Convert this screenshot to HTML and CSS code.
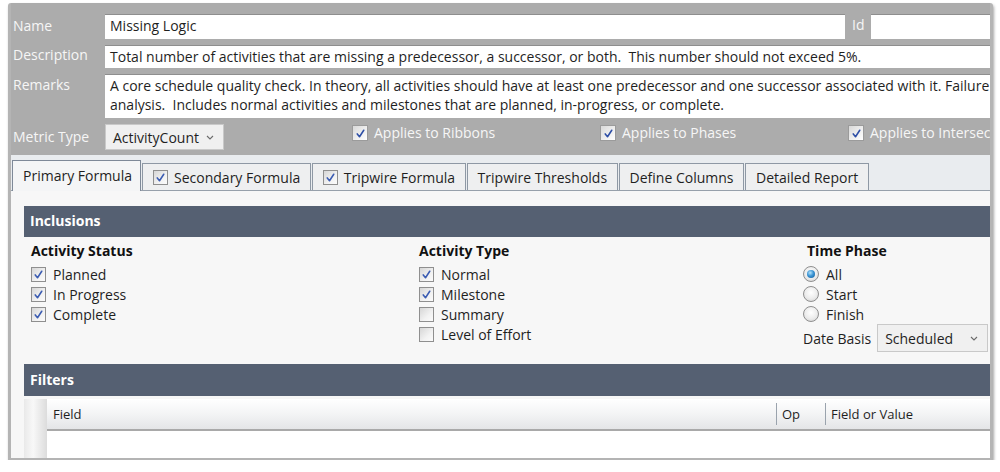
FILE: index.html
```html
<!DOCTYPE html>
<html>
<head>
<meta charset="utf-8">
<title>Metric</title>
<link rel="stylesheet" href="styles.css">
</head>
<body>
<div class="panel">
  <div class="props">
    <div class="lbl lbl-name">Name</div>
    <div class="row-name">
      <div class="field f-name">Missing Logic</div>
      <div class="lbl id-lbl">Id</div>
      <div class="field f-id"></div>
    </div>
    <div class="lbl lbl-desc">Description</div>
    <div class="field f-desc">Total number of activities that are missing a predecessor, a successor, or both.&nbsp; This number should not exceed 5%.</div>
    <div class="lbl lbl-rem">Remarks</div>
    <div class="field f-rem">
      <div class="line">A core schedule quality check. In theory, all activities should have at least one predecessor and one successor associated with it. Failure</div>
      <div class="line">analysis.&nbsp; Includes normal activities and milestones that are planned, in-progress, or complete.</div>
    </div>
    <div class="lbl lbl-metric">Metric Type</div>
    <div class="row-metric">
      <div class="select metric-select"><span>ActivityCount</span><svg class="chev" viewBox="0 0 8 5"><path d="M1 1 L4 4 L7 1"/></svg></div>
      <div class="applies first"><span class="cb hcb"><svg viewBox="0 0 16 16"><path d="M4 8.5 L6.8 12 L12 4"/></svg></span>Applies to Ribbons</div>
      <div class="applies"><span class="cb hcb"><svg viewBox="0 0 16 16"><path d="M4 8.5 L6.8 12 L12 4"/></svg></span>Applies to Phases</div>
      <div class="applies last"><span class="cb hcb"><svg viewBox="0 0 16 16"><path d="M4 8.5 L6.8 12 L12 4"/></svg></span>Applies to Intersec</div>
    </div>
  </div>

  <div class="tabs">
    <div class="tab active">Primary Formula</div>
    <div class="tab"><span class="cb tcb"><svg viewBox="0 0 16 16"><path d="M4 8.5 L6.8 12 L12 4"/></svg></span>Secondary Formula</div>
    <div class="tab"><span class="cb tcb"><svg viewBox="0 0 16 16"><path d="M4 8.5 L6.8 12 L12 4"/></svg></span>Tripwire Formula</div>
    <div class="tab">Tripwire Thresholds</div>
    <div class="tab">Define Columns</div>
    <div class="tab">Detailed Report</div>
  </div>

  <div class="content">
    <div class="bar">Inclusions</div>
    <div class="incl">
      <div class="col col-status">
        <div class="heading">Activity Status</div>
        <div class="opt"><span class="cb"><svg viewBox="0 0 16 16"><path d="M4 8.5 L6.8 12 L12 4"/></svg></span>Planned</div>
        <div class="opt"><span class="cb"><svg viewBox="0 0 16 16"><path d="M4 8.5 L6.8 12 L12 4"/></svg></span>In Progress</div>
        <div class="opt"><span class="cb"><svg viewBox="0 0 16 16"><path d="M4 8.5 L6.8 12 L12 4"/></svg></span>Complete</div>
      </div>
      <div class="col col-type">
        <div class="heading">Activity Type</div>
        <div class="opt"><span class="cb"><svg viewBox="0 0 16 16"><path d="M4 8.5 L6.8 12 L12 4"/></svg></span>Normal</div>
        <div class="opt"><span class="cb"><svg viewBox="0 0 16 16"><path d="M4 8.5 L6.8 12 L12 4"/></svg></span>Milestone</div>
        <div class="opt"><span class="cb"></span>Summary</div>
        <div class="opt"><span class="cb"></span>Level of Effort</div>
      </div>
      <div class="col col-phase">
        <div class="heading phase-heading">Time Phase</div>
        <div class="opt"><span class="radio on"></span>All</div>
        <div class="opt"><span class="radio"></span>Start</div>
        <div class="opt"><span class="radio"></span>Finish</div>
        <div class="date-row">
          <span>Date Basis</span>
          <div class="select date-select"><span>Scheduled</span><svg class="chev" viewBox="0 0 8 5"><path d="M1 1 L4 4 L7 1"/></svg></div>
        </div>
      </div>
    </div>

    <div class="bar bar-filters">Filters</div>
    <div class="grid">
      <div class="rowhead"></div>
      <div class="gridbody">
        <div class="ghead">
          <div class="gcol gc-field">Field</div>
          <div class="gcol gc-op"><span class="sep"></span>Op</div>
          <div class="gcol gc-val"><span class="sep"></span>Field or Value</div>
        </div>
        <div class="grow"></div>
      </div>
    </div>
  </div>
</div>
</body>
</html>
```

FILE: styles.css
```css
html, body {
  margin: 0;
  padding: 0;
  background: #ffffff;
}

body {
  font-family: "Open Sans", "Noto Sans", "DejaVu Sans", sans-serif;
  font-size: 14px;
  color: #1f1f1f;
}

.panel {
  margin: 3px 0 0 8px;
  width: 985px;
  height: 457px;
  box-sizing: border-box;
  border-left: 3px solid #b4b4b4;
  border-right: 3px solid #b4b4b4;
  border-bottom: 2px solid #b4b4b4;
  border-radius: 3px 3px 0 0;
  box-shadow: 1px 2px 3px rgba(0, 0, 0, 0.35);
  background: #f7f7f7;
  overflow: hidden;
  display: flex;
  flex-direction: column;
}

/* ---------- property header ---------- */
.props {
  background: #acacac;
  padding: 11px 0 5px 2px;
  display: grid;
  grid-template-columns: 92px 1fr;
  grid-template-rows: 25px 23px 44px 26px;
  row-gap: 6px;
  overflow: hidden;
}

.lbl {
  color: #f6f6f6;
  font-size: 14px;
  white-space: nowrap;
}

.lbl-name { line-height: 23px; }
.lbl-desc { line-height: 20px; }
.lbl-rem { line-height: 22px; }
.lbl-metric { line-height: 26px; }

.field {
  background: #ffffff;
  border-top: 1px solid #8e8e8e;
  box-sizing: border-box;
  padding: 0 5px;
  white-space: nowrap;
  overflow: hidden;
  line-height: 22px;
  font-size: 14px;
  color: #1f1f1f;
}

.row-name {
  display: flex;
  align-items: stretch;
}

.f-name { width: 740px; flex: none; }

.id-lbl {
  padding: 0 7px 0 7px;
  line-height: 22px;
}

.f-id { flex: 1; }

.f-desc { line-height: 21px; }

.f-rem { padding-top: 1px; }

.f-rem .line { line-height: 19px; }

.row-metric {
  display: flex;
  align-items: flex-start;
}

.select {
  background: #f0f0f0;
  border: 1px solid #c9c9c9;
  box-sizing: border-box;
  display: flex;
  align-items: center;
  justify-content: space-between;
  padding: 0 9px 0 7px;
  color: #1f1f1f;
  font-size: 14px;
}

.chev {
  width: 8px;
  height: 5px;
  flex: none;
}

.chev path {
  fill: none;
  stroke: #6b6b6b;
  stroke-width: 1.1;
}

.metric-select {
  width: 119px;
  height: 26px;
}

.applies {
  display: flex;
  align-items: center;
  color: #f6f6f6;
  font-size: 14px;
  line-height: 18px;
  width: 248px;
  flex: none;
  white-space: nowrap;
}

.applies.first { margin-left: 128px; }
.applies.last { width: auto; }

/* ---------- checkboxes ---------- */
.cb {
  width: 15px;
  height: 15px;
  box-sizing: border-box;
  border: 1px solid #8f8f8f;
  background: linear-gradient(135deg, #d6d6d6 0%, #f2f2f2 60%, #fbfbfb 100%);
  display: inline-flex;
  align-items: center;
  justify-content: center;
  margin-right: 7px;
  flex: none;
}

.cb svg {
  width: 13px;
  height: 13px;
}

.cb path {
  fill: none;
  stroke: #3b5cb2;
  stroke-width: 1.9;
  stroke-linecap: round;
  stroke-linejoin: round;
}

.hcb {
  width: 16px;
  height: 16px;
  margin-right: 6px;
  border-color: #9b9b9b;
  background: linear-gradient(135deg, #d9d9d9 0%, #f4f4f4 70%, #ffffff 100%);
}

.hcb path { stroke: #2d4ea6; }

.tcb { margin-right: 6px; }

/* ---------- tabs ---------- */
.tabs {
  background: #e9ecef;
  height: 36px;
  box-sizing: border-box;
  border-bottom: 1px solid #97a0ab;
  display: flex;
  align-items: flex-end;
  padding-left: 1px;
  flex: none;
}

.tab {
  height: 27px;
  box-sizing: border-box;
  border: 1px solid #8e98a4;
  border-bottom: none;
  background: #eeeff0;
  padding: 0 9.5px 0 10px;
  display: flex;
  align-items: center;
  margin-right: 1px;
  font-size: 14px;
  white-space: nowrap;
  color: #1f1f1f;
}

.tab.active {
  height: 31px;
  margin-bottom: -1px;
  background: #f4f5f6;
  border-color: #7e8998;
  padding: 0 8px 2px 10px;
}

/* ---------- content ---------- */
.content {
  flex: 1;
  background: #f7f7f7;
  padding: 15px 0 0 13px;
  display: flex;
  flex-direction: column;
  min-height: 0;
}

.bar {
  background: #556072;
  color: #ffffff;
  font-weight: 700;
  font-size: 14px;
  height: 31px;
  line-height: 30px;
  padding-left: 6px;
  flex: none;
}

.bar-filters {
  height: 32px;
  line-height: 31px;
}

.incl {
  display: flex;
  padding-left: 7px;
  height: 116px;
  margin-bottom: 11px;
  flex: none;
}

.col { display: flex; flex-direction: column; }
.col-status { width: 388px; }
.col-type { width: 384px; }
.col-phase { flex: 1; }

.heading {
  font-weight: 700;
  font-size: 14px;
  line-height: 18px;
  margin-top: 5px;
  margin-bottom: 4px;
  color: #111;
}

.phase-heading { padding-left: 4px; }

.opt {
  display: flex;
  align-items: center;
  height: 20px;
  font-size: 14px;
  white-space: nowrap;
}

.radio {
  width: 16px;
  height: 16px;
  box-sizing: border-box;
  border-radius: 50%;
  border: 1px solid #8f8f8f;
  background: radial-gradient(circle at 50% 40%, #ffffff 0%, #ececec 55%, #cfcfcf 100%);
  margin-right: 7px;
  display: inline-flex;
  align-items: center;
  justify-content: center;
  flex: none;
}

.radio.on::after {
  content: "";
  width: 8px;
  height: 8px;
  border-radius: 50%;
  background: radial-gradient(circle at 40% 35%, #b5e3fb 0%, #3c95d4 45%, #0e5a98 100%);
}

.date-row {
  display: flex;
  align-items: center;
  height: 28px;
  font-size: 14px;
  white-space: nowrap;
}

.date-row > span { margin-right: 6px; }

.date-select {
  width: 111px;
  height: 28px;
}

/* ---------- grid ---------- */
.grid {
  margin-top: 3px;
  display: flex;
  flex: 1;
  min-height: 0;
}

.rowhead {
  width: 23px;
  flex: none;
  background: linear-gradient(to right, #e9e9e9 0%, #f8f8f8 40%, #dcdcdc 100%);
}

.gridbody {
  flex: 1;
  display: flex;
  flex-direction: column;
  background: #ffffff;
}

.ghead {
  height: 32px;
  box-sizing: border-box;
  border-bottom: 2px solid #a9a9a9;
  background: linear-gradient(#ffffff 0%, #f3f4f5 50%, #e4e5e7 100%);
  display: flex;
  align-items: center;
  font-size: 13px;
  color: #1f1f1f;
}

.gcol {
  display: flex;
  align-items: center;
  white-space: nowrap;
}

.gc-field { width: 729px; padding-left: 6px; box-sizing: border-box; }
.gc-op { width: 49px; }
.gc-val { flex: 1; }

.sep {
  width: 1px;
  height: 22px;
  background: #9aa3ad;
  margin-right: 5px;
}

.grow { flex: 1; background: #ffffff; }
```
